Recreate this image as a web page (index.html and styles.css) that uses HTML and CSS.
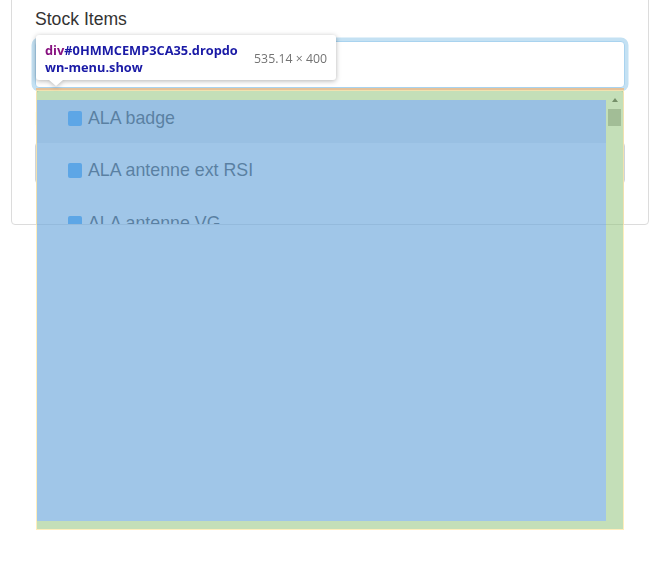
FILE: index.html
```html
<!DOCTYPE html>
<html>
<head>
<meta charset="utf-8">
<link rel="stylesheet" href="styles.css">
</head>
<body>
<div class="page">
  <div class="card">
    <div class="group">
      <label class="lbl">Stock Items</label>
      <div class="select focus"></div>
    </div>
    <div class="group">
      <label class="lbl">Location</label>
      <div class="select second"></div>
    </div>
    <div class="dropdown">
      <div class="list">
        <div class="opt active"><span class="box"></span><span class="txt">ALA badge</span></div>
        <div class="opt"><span class="box"></span><span class="txt">ALA antenne ext RSI</span></div>
        <div class="opt"><span class="box"></span><span class="txt">ALA antenne VG</span></div>
      </div>
      <div class="scrollbar">
        <div class="sb-btn"><span class="sb-arrow"></span></div>
        <div class="sb-thumb"></div>
      </div>
    </div>
  </div>

  <div class="hl">
    <div class="hl-b">
      <div class="hl-p">
        <div class="hl-c"></div>
      </div>
    </div>
  </div>

  <div class="tip">
    <div class="tip-name"><span class="tag">div</span>#0HMMCEMP3CA35.dropdo<br>wn-menu.show</div>
    <div class="tip-dim">535.14 × 400</div>
  </div>
</div>
</body>
</html>
```
FILE: styles.css
```css
html, body {
  margin: 0;
  background: #fff;
}
body {
  font-family: "Liberation Sans", Arial, sans-serif;
}
.page {
  position: relative;
  height: 575px;
  overflow: hidden;
}
.card {
  position: relative;
  margin: -10px 16px 0 11px;
  border: 1px solid #dcdcdc;
  border-radius: 4px;
  padding: 15.3px 23px 40px;
  overflow: hidden;
  background: #fff;
}
.group + .group {
  margin-top: 18.3px;
}
.lbl {
  display: block;
  font-size: 17.6px;
  line-height: 26.4px;
  color: #333;
  margin-bottom: 8.3px;
}
.group + .group .lbl {
  margin-bottom: 9.3px;
}
.select {
  box-sizing: border-box;
  height: 47px;
  border: 1px solid #ced4da;
  border-radius: 4px;
  background: #fff;
}
.select.second {
  height: 42px;
}
.select.focus {
  border-color: #a9d3ef;
  box-shadow: 0 0 0 3.5px #c4e1f3;
}
.dropdown {
  position: absolute;
  top: 99px;
  left: 24px;
  width: 588px;
  height: 440px;
  box-sizing: border-box;
  border: 1px solid rgba(0, 0, 0, 0.15);
  border-radius: 4px;
  background: #fff;
  display: flex;
}
.list {
  flex: 1;
  padding: 9px 0 8px;
  overflow: hidden;
}
.opt {
  display: flex;
  align-items: center;
  gap: 6px;
  padding: 5px 31px 12px;
  margin-bottom: 9px;
  font-size: 17.8px;
  line-height: 26.4px;
  color: #333;
}
.opt.active {
  background: #e9ecef;
}
.box {
  width: 14px;
  height: 15px;
  background: #3ca0fa;
  border-radius: 2px;
  flex: none;
}
.scrollbar {
  width: 17px;
  flex: none;
  display: flex;
  flex-direction: column;
  align-items: center;
}
.sb-btn {
  width: 17px;
  height: 17px;
  display: flex;
  align-items: center;
  justify-content: center;
}
.sb-arrow {
  width: 0;
  height: 0;
  border-left: 3.5px solid transparent;
  border-right: 3.5px solid transparent;
  border-bottom: 4px solid #505050;
}
.sb-thumb {
  margin-top: 1px;
  width: 13px;
  height: 17px;
  background: #b4b4b4;
}
.hl {
  position: absolute;
  left: 36px;
  top: 88px;
  width: 588px;
  border-top: 2px solid rgba(246, 178, 107, 0.66);
}
.hl-b {
  border: 1px solid rgba(255, 229, 153, 0.66);
}
.hl-p {
  border-style: solid;
  border-color: rgba(147, 196, 125, 0.55);
  border-width: 9px 17px 8px 0;
}
.hl-c {
  height: 421px;
  background: rgba(111, 168, 220, 0.66);
}
.tip {
  position: absolute;
  left: 36px;
  top: 35px;
  width: 300px;
  height: 45px;
  box-sizing: border-box;
  padding: 2px 9px 0;
  background: #fff;
  border-radius: 3px;
  display: flex;
  align-items: center;
  justify-content: space-between;
  filter: drop-shadow(0 1px 2.5px rgba(0, 0, 0, 0.3));
}
.tip::after {
  content: "";
  position: absolute;
  left: 13px;
  bottom: -6px;
  width: 0;
  height: 0;
  border-left: 7px solid transparent;
  border-right: 7px solid transparent;
  border-top: 6px solid #fff;
}
.tip-name {
  font-family: "Open Sans", sans-serif;
  font-weight: 700;
  font-size: 12.8px;
  line-height: 16.5px;
  color: #1a1aa6;
}
.tag {
  color: #881280;
}
.tip-dim {
  font-family: "Open Sans", sans-serif;
  font-size: 12.3px;
  color: #737373;
}
```
